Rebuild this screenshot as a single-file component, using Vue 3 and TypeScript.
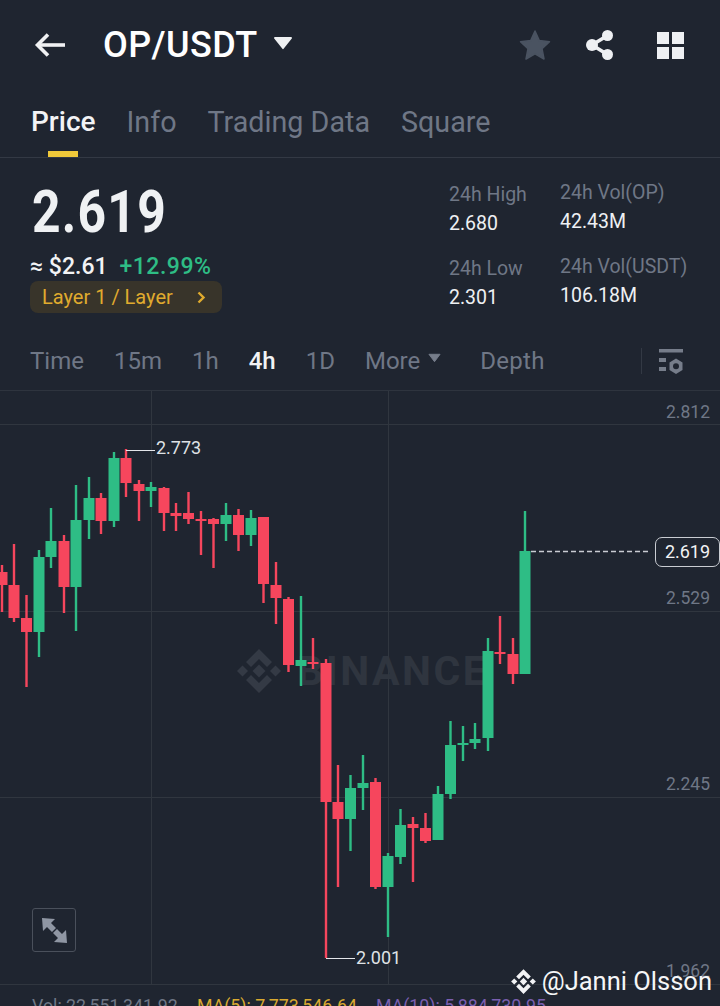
<template>
  <div class="page">
    <header class="top">
      <div class="top-left">
        <svg class="back" width="32" height="26" viewBox="0 0 32 26" fill="none" stroke="#f0f1f3" stroke-width="3.6">
          <path d="M31 13H4" />
          <path d="M14 2.500 3.500 13 14 23.500" />
        </svg>
        <span class="pair">OP/USDT</span>
        <svg class="pair-caret" width="20" height="15" viewBox="0 0 20 15"><path d="M2 2h16a1 1 0 0 1 .8 1.600l-8 10a1 1 0 0 1-1.600 0l-8-10A1 1 0 0 1 2 2z" fill="#eef0f2" /></svg>
      </div>
      <div class="top-icons">
        <svg class="star" width="32" height="32" viewBox="0 0 32 32"><path d="M16 2l4.300 9.500 10.200 1.200-7.500 7 2 10.300-9-5.200-9 5.200 2-10.300-7.500-7 10.200-1.200z" fill="#4a5361" stroke="#4a5361" stroke-width="1.500" stroke-linejoin="round" /></svg>
        <svg class="share" width="30" height="32" viewBox="0 0 30 32">
          <circle cx="22.500" cy="6.500" r="5.500" fill="#eef0f3" />
          <circle cx="7" cy="16" r="6" fill="#eef0f3" />
          <circle cx="22.500" cy="25.500" r="5.500" fill="#eef0f3" />
          <path d="M22.500 6.500 7 16l15.500 9.500" fill="none" stroke="#eef0f3" stroke-width="3.600" />
        </svg>
        <div class="grid-icon"><i></i><i></i><i></i><i></i></div>
      </div>
    </header>

    <nav class="tabs">
      <span v-for="tab in tabs" :key="tab" class="tab" :class="{ active: tab === 'Price' }">{{ tab }}</span>
    </nav>

    <section class="stats">
      <div class="price-col">
        <div class="last">2.619</div>
        <div class="sub"><span class="usd">≈ $2.61</span><span class="change">+12.99%</span></div>
        <div class="chip">
          <span>Layer 1 / Layer</span>
          <svg width="9" height="13" viewBox="0 0 9 13" fill="none" stroke="#e0ab2e" stroke-width="2.400"><path d="M1.500 1.500 6.500 6.500l-5 5" /></svg>
        </div>
      </div>
      <div class="figures">
        <div class="fig-col first">
          <div class="fig"><span class="fig-label">24h High</span><span class="fig-value">2.680</span></div>
          <div class="fig"><span class="fig-label">24h Low</span><span class="fig-value">2.301</span></div>
        </div>
        <div class="fig-col">
          <div class="fig"><span class="fig-label">24h Vol(OP)</span><span class="fig-value">42.43M</span></div>
          <div class="fig"><span class="fig-label">24h Vol(USDT)</span><span class="fig-value">106.18M</span></div>
        </div>
      </div>
    </section>

    <div class="intervals">
      <span class="iv">Time</span>
      <span class="iv">15m</span>
      <span class="iv">1h</span>
      <span class="iv on">4h</span>
      <span class="iv">1D</span>
      <span class="iv more">More
        <svg width="13" height="10" viewBox="0 0 14 10"><path d="M1 1h12L7 9z" fill="#767d8a" stroke="#767d8a" stroke-linejoin="round" /></svg>
      </span>
      <span class="iv depth">Depth</span>
      <span class="iv-rule"></span>
      <svg class="iv-settings" width="25" height="26" viewBox="0 0 25 26" fill="#767d8a">
        <rect x="0" y="0" width="24" height="3.500" />
        <rect x="0" y="9" width="7" height="4" />
        <rect x="0" y="18" width="7" height="4" />
        <path d="M10.500 13.500 17 9.500l6.500 4v7.500L17 25l-6.500-4z" />
        <circle cx="17" cy="17.200" r="3" fill="#1f2530" />
      </svg>
    </div>

    <div class="chart">
      <div class="watermark">
        <svg width="48" height="48" viewBox="0 0 48 48" fill="#343a45">
          <path v-for="d in logoPaths" :key="d" :d="d" />
        </svg>
        <span>BINANCE</span>
      </div>

      <svg class="plot" width="720" height="593" viewBox="0 391 720 593">
        <g stroke="#30363f" stroke-width="1">
          <path d="M0 424.500H720M0 611.500H720M0 797.500H720" />
          <path d="M151.500 391V984M388.500 391V984" />
        </g>
        <g v-for="c in candles" :key="c.x" :fill="c.up ? UP : DOWN">
          <rect :x="c.x - 1.200" :y="c.hi" width="2.400" :height="c.lo - c.hi" />
          <rect :x="c.x - 5.500" :y="c.top" width="11" :height="c.bottom - c.top" />
        </g>
        <path d="M126 450.500H155M326 958.500H355" stroke="#e4e6ea" stroke-width="1.200" fill="none" />
        <path d="M531 551.500H648" stroke="#c9ccd2" stroke-width="1.400" stroke-dasharray="5 3" fill="none" />
      </svg>

      <span v-for="a in axis" :key="a.label" class="axis" :style="{ top: a.y - 391 + 'px' }">{{ a.label }}</span>
      <span class="mark" style="left: 156px; top: 47px">2.773</span>
      <span class="mark" style="left: 356px; top: 557px">2.001</span>
      <span class="now">2.619</span>

      <div class="expand">
        <svg width="42" height="42" viewBox="1 1 42 42" fill="#8f96a3">
          <path d="M10 10 23 11 19 15 24 20 20 24 15 19 11 23z" />
          <path d="M35 35 22 34 26 30 21 25 25 21 30 26 34 22z" />
        </svg>
      </div>
    </div>

    <div class="legend">
      <span class="vol">Vol: 22,551,341.92</span>
      <span class="ma5">MA(5): 7,773,546.64</span>
      <span class="ma10">MA(10): 5,884,730.95</span>
    </div>

    <div class="credit">
      <svg width="27" height="27" viewBox="0 0 48 48" fill="#f2f3f5">
        <path v-for="d in logoPaths" :key="d" :d="d" />
      </svg>
      <span>@Janni Olsson</span>
    </div>
  </div>
</template>

<script setup lang="ts">
interface Candle {
  x: number;
  hi: number;
  lo: number;
  top: number;
  bottom: number;
  up: boolean;
}

const UP = '#2ebd85';
const DOWN = '#f6465d';

const tabs = ['Price', 'Info', 'Trading Data', 'Square'];

const logoPaths = [
  'M24 2 37 15 32 20 24 12 16 20 11 15z',
  'M24 46 37 33 32 28 24 36 16 28 11 33z',
  'M2 24 7.500 18.500 13 24 7.500 29.500z',
  'M46 24 40.500 18.500 35 24 40.500 29.500z',
  'M24 17.500 30.500 24 24 30.500 17.500 24z',
];

const axis = [
  { label: '2.812', y: 402 },
  { label: '2.529', y: 588 },
  { label: '2.245', y: 774 },
  { label: '1.962', y: 961 },
];

// x, wick high, wick low, body top, body bottom, 1 = green
const raw: number[][] = [
  [2, 565, 612, 572, 585, 0], [14, 544, 622, 585, 618, 0], [26.5, 595, 687, 618, 632, 0],
  [39, 550, 657, 557, 632, 1], [51, 508, 568, 541, 557, 1], [64, 535, 613, 541, 587, 0],
  [76, 485, 631, 520, 587, 1], [89, 477, 539, 498, 520, 1], [101, 493, 534, 498, 521, 0],
  [114, 452, 527, 458, 521, 1], [126, 449, 497, 458, 483, 0], [139, 480, 521, 484, 491, 0],
  [151, 482, 507, 487, 491, 1], [164, 487, 531, 488, 513, 0], [176, 503, 531, 513, 516, 0],
  [188.5, 492, 524, 513, 519, 0], [201, 511, 555, 519, 521, 0], [213.5, 518, 568, 519, 524, 0],
  [226, 503, 541, 515, 524, 1], [238.5, 509, 551, 515, 535, 0], [251, 510, 546, 518, 535, 1],
  [263.5, 517, 603, 517, 584, 0], [276, 562, 624, 585, 598, 0], [288.5, 597, 672, 599, 665, 0],
  [301, 596, 686, 660, 666, 1], [313, 638, 669, 662, 664, 0], [326, 659, 958, 663, 802, 0],
  [338, 765, 887, 802, 819, 0], [350.5, 775, 851, 788, 819, 1], [363, 755, 810, 783, 788, 1],
  [375.5, 778, 889, 782, 887, 0], [388, 853, 937, 856, 887, 1], [400.5, 809, 864, 825, 857, 1],
  [413, 817, 882, 824, 828, 0], [425.5, 813, 843, 828, 841, 0], [438, 786, 840, 794, 840, 1],
  [450.5, 721, 799, 745, 794, 1], [463, 726, 761, 743, 745, 1], [475, 723, 749, 739, 743, 1],
  [488, 638, 751, 651, 738, 1], [500, 616, 664, 652, 654, 0], [513, 638, 684, 654, 674, 0],
  [525, 511, 674, 551, 674, 1],
];

const candles: Candle[] = raw.map(([x, hi, lo, top, bottom, up]) => ({
  x,
  hi,
  lo,
  top,
  bottom,
  up: up === 1,
}));
</script>

<style>
html,
body {
  background: #1f2530;
}
</style>

<style scoped>
.page {
  position: relative;
  width: 720px;
  height: 1006px;
  overflow: hidden;
  background: #1f2530;
  color: #eef0f3;
  font-family: Roboto, "Noto Sans", sans-serif;
}

.top {
  height: 90px;
  display: flex;
  align-items: center;
  justify-content: space-between;
  padding: 0 36px 0 34px;
}

.top-left {
  display: flex;
  align-items: center;
}

.back {
  margin-right: 37px;
}

.pair {
  font-size: 36px;
  font-weight: 500;
  letter-spacing: 0.4px;
  color: #fff;
  margin-right: 15px;
}

.pair-caret {
  margin-top: -5px;
}

.top-icons {
  display: flex;
  align-items: center;
}

.star {
  margin-right: 34px;
}

.share {
  margin-right: 42px;
}

.grid-icon {
  display: grid;
  grid-template-columns: 12px 12px;
  grid-template-rows: 12px 12px;
  gap: 3px;
}

.grid-icon i {
  background: #eef0f3;
}

.tabs {
  height: 68px;
  box-sizing: border-box;
  display: flex;
  gap: 31px;
  padding: 14px 32px 0 31px;
  border-bottom: 1px solid #333944;
  font-size: 28.700px;
  line-height: 36px;
}

.tab {
  position: relative;
  color: #6f7786;
}

.tab.active {
  color: #f2f3f5;
  font-size: 28px;
  font-weight: 500;
}

.tab.active::after {
  content: "";
  position: absolute;
  left: 17px;
  bottom: 0;
  width: 30px;
  height: 6px;
  background: #f0c93a;
}

.stats {
  height: 174px;
  display: flex;
  justify-content: space-between;
  padding: 0 0 0 30px;
}

.price-col {
  display: flex;
  flex-direction: column;
}

.last {
  margin: 21px 0 0 2px;
  font-size: 60px;
  font-weight: 700;
  line-height: 66px;
  letter-spacing: 1.500px;
  color: #eff1f3;
  transform: scaleX(0.83);
  transform-origin: left center;
}

.sub {
  display: flex;
  gap: 12px;
  margin-top: 9px;
  font-size: 23px;
  font-weight: 500;
  line-height: 26px;
}

.usd {
  color: #f2f3f5;
}

.change {
  color: #2ebd85;
  letter-spacing: 0.500px;
}

.chip {
  box-sizing: border-box;
  width: 192px;
  height: 32px;
  margin-top: 1px;
  padding: 0 16px 0 12px;
  display: flex;
  align-items: center;
  justify-content: space-between;
  background: #38342a;
  border-radius: 8px;
  color: #e0ab2e;
  font-size: 20px;
}

.figures {
  display: flex;
  width: 271px;
}

.fig-col {
  width: 111px;
  padding-top: 23px;
}

.fig-col.first {
  padding-top: 25px;
}

.fig {
  height: 74px;
  display: flex;
  flex-direction: column;
}

.fig-label {
  font-size: 19.500px;
  line-height: 24px;
  color: #6f7786;
  white-space: nowrap;
}

.fig-value {
  margin-top: 5px;
  font-size: 19.500px;
  line-height: 24px;
  color: #eef0f3;
  white-space: nowrap;
}

.intervals {
  height: 59px;
  box-sizing: border-box;
  display: flex;
  align-items: center;
  padding: 0 36px 0 30px;
  border-bottom: 1px solid #2e343e;
  font-size: 24px;
  color: #6f7786;
}

.iv {
  margin-right: 30px;
}

.iv.on {
  color: #f2f3f5;
  font-weight: 500;
}

.more {
  display: flex;
  align-items: center;
  gap: 8px;
  margin-right: 39px;
}

.more svg {
  margin-top: -6px;
}

.depth {
  margin-right: 0;
  letter-spacing: 0.300px;
}

.iv-rule {
  width: 1px;
  height: 26px;
  margin-left: auto;
  margin-right: 17px;
  background: #333944;
}

.iv-settings {
  margin-top: 2px;
}

.chart {
  position: relative;
  height: 593px;
  border-bottom: 1px solid #30363f;
}

.plot {
  display: block;
  position: relative;
}

.watermark {
  position: absolute;
  left: 235px;
  top: 256px;
  display: flex;
  align-items: center;
  gap: 14px;
  color: #2f353f;
  font-size: 41px;
  font-weight: 700;
  letter-spacing: 2.500px;
}

.axis {
  position: absolute;
  right: 10px;
  font-size: 17.500px;
  line-height: 20px;
  color: #6f7786;
}

.mark {
  position: absolute;
  font-size: 18px;
  line-height: 20px;
  color: #dfe2e6;
}

.now {
  position: absolute;
  left: 655px;
  top: 146px;
  width: 65px;
  height: 30px;
  box-sizing: border-box;
  border: 1px solid #c9ccd2;
  border-radius: 7px;
  background: #1f2530;
  text-align: center;
  font-size: 18px;
  line-height: 28px;
  color: #f2f3f5;
}

.expand {
  position: absolute;
  left: 32px;
  top: 517px;
  width: 44px;
  height: 44px;
  box-sizing: border-box;
  border: 1px solid #4a505b;
  border-radius: 3px;
}

.expand svg {
  display: block;
}

.legend {
  display: flex;
  padding: 10px 0 0 32px;
  font-size: 17.800px;
  line-height: 22px;
  white-space: nowrap;
}

.vol {
  width: 165px;
  color: #6f7786;
}

.ma5 {
  width: 179px;
  color: #d9a92f;
}

.ma10 {
  color: #7a5fb0;
}

.credit {
  position: absolute;
  right: 8px;
  bottom: 10px;
  display: flex;
  align-items: center;
  gap: 5px;
  color: #f5f6f7;
  font-size: 25.500px;
  line-height: 30px;
}
</style>
